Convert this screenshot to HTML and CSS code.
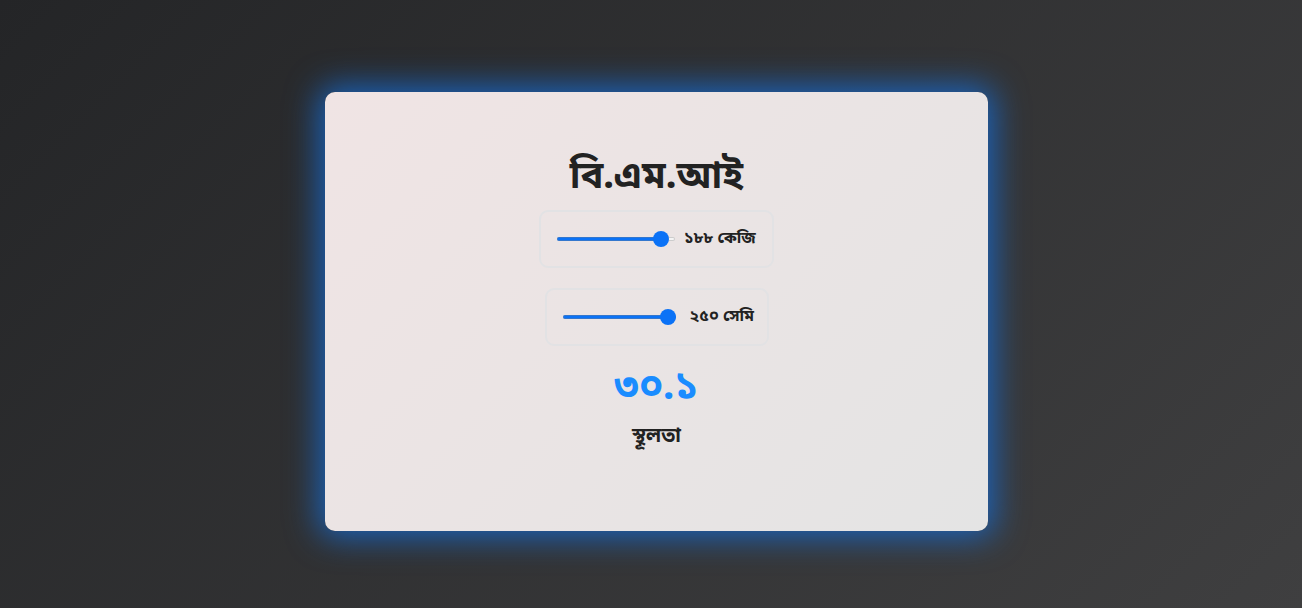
FILE: index.html
```html
<!DOCTYPE html>
<html lang="bn">
<head>
<meta charset="utf-8">
<title>বি.এম.আই</title>
<link rel="stylesheet" href="styles.css">
</head>
<body>
<div class="card">
  <h1 class="title">বি.এম.আই</h1>
  <div class="field field-weight">
    <input class="slider" type="range" min="0" max="200" value="188" style="--fill: 94%">
    <span class="field-label">১৮৮ কেজি</span>
  </div>
  <div class="field field-height">
    <input class="slider" type="range" min="0" max="250" value="250" style="--fill: 100%">
    <span class="field-label">২৫০ সেমি</span>
  </div>
  <div class="result">৩০.১</div>
  <div class="status">স্থূলতা</div>
</div>
</body>
</html>
```
FILE: styles.css
```css
html, body {
  height: 100%;
}
body {
  margin: 0;
  padding: 92px 0 0 11px;
  box-sizing: border-box;
  background: linear-gradient(135deg, #242527 0%, #3f3f40 100%);
  font-family: "Noto Sans Bengali", "Noto Sans", "DejaVu Sans", sans-serif;
  display: flex;
  justify-content: center;
  align-items: flex-start;
}
.card {
  width: 663px;
  height: 439px;
  box-sizing: border-box;
  border-radius: 10px;
  background: linear-gradient(135deg, #f0e4e4 0%, #e4e4e4 100%);
  box-shadow: 0 0 32px 6px rgba(22, 108, 212, 0.85);
  display: flex;
  flex-direction: column;
  align-items: center;
  padding-top: 59px;
}
.title {
  margin: 0;
  font-size: 38px;
  font-weight: 700;
  color: #222;
  line-height: 56px;
}
.field {
  display: flex;
  align-items: center;
  height: 58px;
  box-sizing: border-box;
  border: 2px solid #e2e2e4;
  border-radius: 9px;
  margin-top: 3px;
}
.field-weight {
  width: 235px;
  padding: 0 16px;
  gap: 9px;
}
.field-height {
  width: 224px;
  margin-top: 20px;
  padding: 0 16px;
  gap: 14px;
}
.slider {
  -webkit-appearance: none;
  appearance: none;
  margin: 0;
  width: 118px;
  height: 16px;
  background: transparent;
}
.field-height .slider {
  width: 113px;
}
.slider::-webkit-slider-runnable-track {
  height: 4px;
  border-radius: 2px;
  background: linear-gradient(to right, #0b72f6 0, #0b72f6 var(--fill), #f4f4f4 var(--fill), #f4f4f4 100%);
  box-shadow: inset 0 0 0 1px rgba(130, 130, 130, 0.35);
}
.slider::-webkit-slider-thumb {
  -webkit-appearance: none;
  appearance: none;
  width: 16px;
  height: 16px;
  border-radius: 50%;
  background: #0b72f6;
  border: none;
  margin-top: -6px;
}
.field-label {
  font-size: 16px;
  font-weight: 700;
  color: #222;
  white-space: nowrap;
}
.result {
  margin-top: 16px;
  font-size: 40px;
  font-weight: 700;
  color: #1a8cff;
  line-height: 54px;
}
.status {
  font-size: 20px;
  font-weight: 700;
  color: #222;
  line-height: 30px;
  margin-top: 6px;
}
```
